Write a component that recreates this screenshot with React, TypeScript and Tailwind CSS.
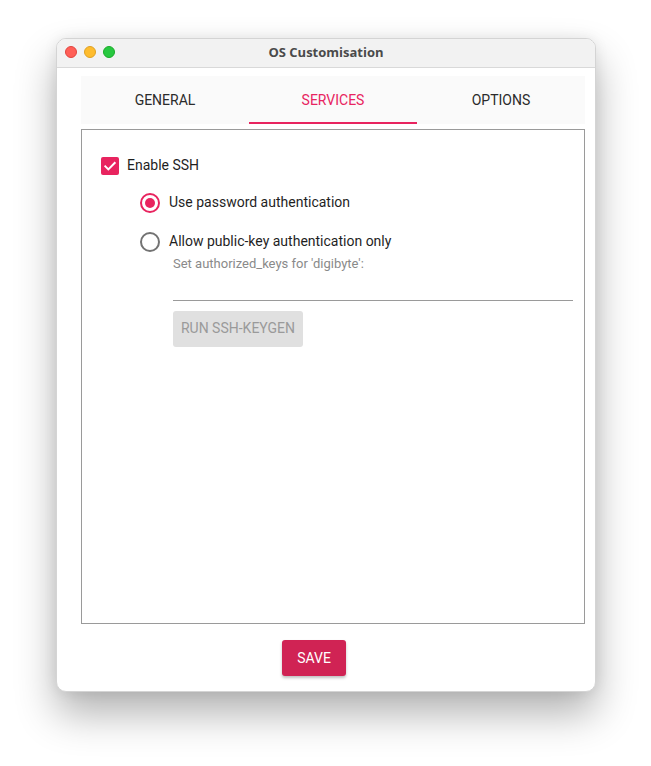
const tabs = ["GENERAL", "SERVICES", "OPTIONS"];

function Radio({ checked }: { checked: boolean }) {
  return (
    <span
      className={
        checked
          ? "flex h-5 w-5 shrink-0 items-center justify-center rounded-full border-2 border-[#e8245f]"
          : "flex h-5 w-5 shrink-0 items-center justify-center rounded-full border-2 border-[#737373]"
      }
    >
      {checked && <span className="h-[10px] w-[10px] rounded-full bg-[#e8245f]" />}
    </span>
  );
}

export default function App() {
  return (
    <main className="min-h-[766px] bg-white pl-[56px] pt-[38px] font-['Roboto',sans-serif]">
      <div className="flex h-[654px] w-[540px] flex-col overflow-hidden rounded-[10px] border border-[#d4d4d4] bg-white shadow-[0_22px_40px_rgba(0,0,0,0.30),0_0_14px_rgba(0,0,0,0.08)]">
        {/* title bar */}
        <div className="relative flex h-[29px] shrink-0 items-center justify-center border-b border-[#d9d9d9] bg-[#f2f2f2]">
          <div className="absolute left-[8px] top-[7px] flex gap-[7px]">
            <span className="h-3 w-3 rounded-full border border-[#e0443e] bg-[#ff5f57]" />
            <span className="h-3 w-3 rounded-full border border-[#dea123] bg-[#febc2e]" />
            <span className="h-3 w-3 rounded-full border border-[#1aab29] bg-[#28c840]" />
          </div>
          <span className="font-['Open_Sans',sans-serif] text-[13px] font-bold text-[#4a4a4a]">
            OS Customisation
          </span>
        </div>

        {/* body */}
        <div className="flex flex-1 flex-col pl-[24px] pr-[10px] pt-[8px]">
          <div className="flex h-[48px] bg-[#fafafa]">
            {tabs.map((t) => (
              <div
                key={t}
                className={
                  t === "SERVICES"
                    ? "flex flex-1 items-center justify-center border-b-2 border-[#e8245f] pt-[2px] text-[14px] text-[#e8245f]"
                    : "flex flex-1 items-center justify-center border-b-2 border-transparent pt-[2px] text-[14px] text-[#2b2b2b]"
                }
              >
                {t}
              </div>
            ))}
          </div>

          <div className="mt-[5px] h-[495px] border border-[#9a9a9a] pl-[19px] pr-[11px] pt-[25px]">
            <label className="flex items-center gap-[8px]">
              <span className="flex h-[18px] w-[18px] items-center justify-center rounded-[2px] bg-[#e8245f]">
                <svg viewBox="0 0 24 24" className="h-[16px] w-[16px]" fill="none" stroke="white" strokeWidth="3" strokeLinecap="square">
                  <path d="M5 12.5l4.5 4.5L19 7.5" />
                </svg>
              </span>
              <span className="text-[14px] text-[#1f1f1f]">Enable SSH</span>
            </label>

            <div className="ml-[39px] mt-[16px] flex flex-col">
              <div className="flex items-center gap-[9px]">
                <Radio checked />
                <span className="text-[14px] text-[#1f1f1f]">Use password authentication</span>
              </div>
              <div className="mt-[18px] flex items-center gap-[9px]">
                <Radio checked={false} />
                <span className="text-[14px] text-[#1f1f1f]">Allow public-key authentication only</span>
              </div>

              <div className="ml-[33px] flex flex-col">
                <p className="mt-[2px] text-[13px] text-[#8a8a8a]">Set authorized_keys for 'digibyte':</p>
                <div className="mt-[26px] h-px bg-[#9a9a9a]" />
                <button className="mt-[10px] h-[36px] w-[130px] rounded-[3px] bg-[#e0e0e0] text-[14px] text-[#9a9a9a]">
                  RUN SSH-KEYGEN
                </button>
              </div>
            </div>
          </div>

          <div className="pl-[201px] pt-[16px]">
            <button className="h-[36px] w-[64px] rounded-[3px] bg-[#d02354] text-[14px] text-white shadow-[0_2px_3px_rgba(0,0,0,0.25)]">
              SAVE
            </button>
          </div>
        </div>
      </div>
    </main>
  );
}
